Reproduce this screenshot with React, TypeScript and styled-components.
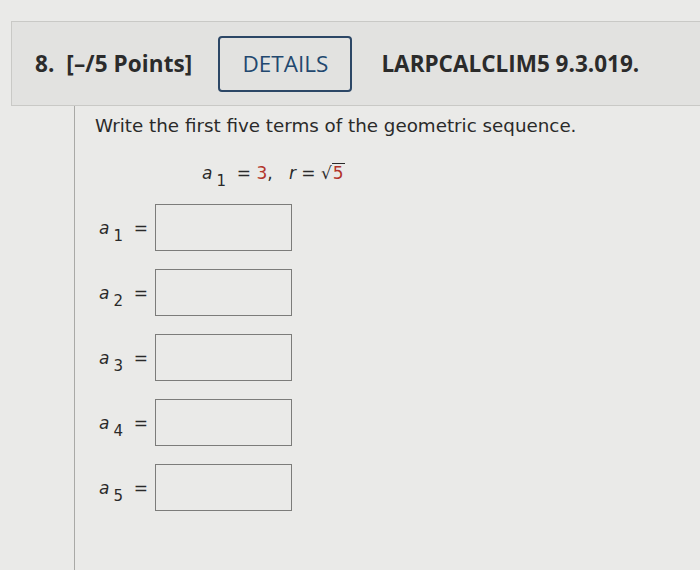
import * as React from "react";
import styled, { createGlobalStyle } from "styled-components";

const GlobalStyle = createGlobalStyle`
  html, body {
    margin: 0;
    padding: 0;
    background: #e8e8e6;
  }
  body {
    width: 700px;
    height: 570px;
    overflow: hidden;
  }
`;

const Page = styled.div`
  width: 700px;
  height: 570px;
  padding: 21px 0 0 11px;
  box-sizing: border-box;
  display: flex;
  flex-direction: column;
  background: #eaeae8;
`;

const Header = styled.div`
  height: 83px;
  margin-right: -20px;
  border: 1px solid #c9c9c6;
  background: #e2e2e0;
  display: flex;
  align-items: center;
  padding-left: 23px;
  font-family: "Open Sans", "Liberation Sans", sans-serif;
  color: #2b2b2b;
`;

const Points = styled.span`
  font-size: 22.5px;
  font-weight: 700;
  letter-spacing: 0.1px;
`;

const DetailsButton = styled.button`
  margin-left: 26px;
  width: 134px;
  height: 56px;
  border: 2px solid #2c4766;
  border-radius: 4px;
  background: transparent;
  color: #22486f;
  font-family: "Open Sans", "Liberation Sans", sans-serif;
  font-size: 22.5px;
  font-weight: 400;
  padding: 0;
`;

const Code = styled.span`
  margin-left: 29px;
  font-size: 22.5px;
  font-weight: 700;
`;

const Body = styled.div`
  flex: 1;
  display: flex;
`;

const Gutter = styled.div`
  width: 63px;
  border-right: 1px solid #a9a9a6;
`;

const Content = styled.div`
  flex: 1;
  padding: 7px 0 0 20px;
  font-family: "DejaVu Sans", Verdana, sans-serif;
  color: #2a2a2a;
`;

const Prompt = styled.div`
  font-size: 18.3px;
  line-height: 26px;
`;

const Formula = styled.div`
  margin-top: 22px;
  padding-left: 107px;
  font-size: 17px;
  line-height: 24px;
  white-space: pre;
`;

const Var = styled.span`
  font-style: italic;
`;

const Sub = styled.span`
  font-size: 15px;
  position: relative;
  top: 7px;
  margin-left: 4px;
`;

const Given = styled.span`
  color: #b3352b;
`;

const Radicand = styled.span`
  display: inline-block;
  color: #b3352b;
  border-top: 1.5px solid #2a2a2a;
  padding: 0 1px;
  line-height: 19px;
`;

const Answers = styled.div`
  margin-top: 18px;
  display: flex;
  flex-direction: column;
  gap: 18px;
`;

const Row = styled.div`
  display: flex;
  align-items: center;
  height: 47px;
`;

const Label = styled.span`
  width: 56px;
  padding-left: 4px;
  font-size: 17px;
  white-space: pre;
`;

const Box = styled.input`
  width: 137px;
  height: 47px;
  box-sizing: border-box;
  border: 1.5px solid #7c7c7a;
  background: transparent;
  margin: 0;
`;

const terms = [1, 2, 3, 4, 5];

export default function App() {
  return (
    <Page>
      <GlobalStyle />
      <Header>
        <Points>8.&nbsp; [–/5 Points]</Points>
        <DetailsButton>DETAILS</DetailsButton>
        <Code>LARPCALCLIM5 9.3.019.</Code>
      </Header>
      <Body>
        <Gutter />
        <Content>
          <Prompt>Write the first five terms of the geometric sequence.</Prompt>
          <Formula>
            <Var>a</Var>
            <Sub>1</Sub>
            {"  = "}
            <Given>3</Given>
            {",   "}
            <Var>r</Var>
            {" = "}
            √<Radicand>5</Radicand>
          </Formula>
          <Answers>
            {terms.map((n) => (
              <Row key={n}>
                <Label>
                  <Var>a</Var>
                  <Sub>{n}</Sub>
                  {"  ="}
                </Label>
                <Box type="text" aria-label={`a${n}`} />
              </Row>
            ))}
          </Answers>
        </Content>
      </Body>
    </Page>
  );
}
